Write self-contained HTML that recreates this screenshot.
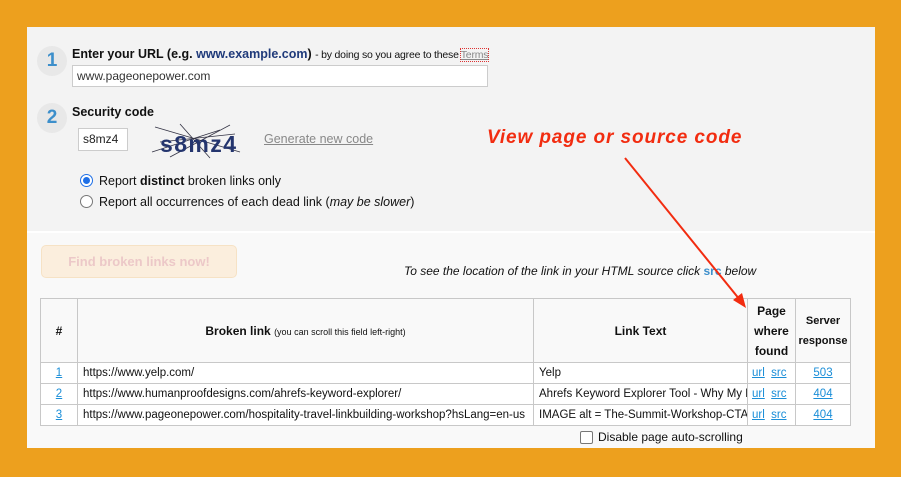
<!DOCTYPE html>
<html><head><style>
body{margin:0;width:901px;height:477px;background:#eda01e;font-family:"Liberation Sans",Arial,sans-serif;position:relative;overflow:hidden}
.panel{position:absolute;left:27px;top:27px;width:848px;height:421px;background:#f9f9f9}
.top{position:absolute;left:0;top:0;width:848px;height:204px;background:#f3f3f3;border-bottom:2px solid #fff}
.a{position:absolute;white-space:nowrap}
.num{position:absolute;width:30px;height:30px;border-radius:50%;background:#e8e8e8;color:#3d8fcb;font-size:19px;font-weight:bold;text-align:center;line-height:30px}
table{position:absolute;left:40px;top:298px;border-collapse:collapse;font-size:11.5px;color:#111;table-layout:fixed;width:811px}
td,th{border:1px solid #c8c8c8;padding:0 5px;white-space:nowrap;overflow:hidden}
th{font-size:12px;background:#f9f9f9}
td{background:#fff;height:20px}
.l{color:#1a8ed8;text-decoration:underline}
.c{text-align:center}
</style></head><body>
<div class="panel"><div class="top"></div></div>
<div class="num" style="left:37px;top:46px">1</div>
<div class="num" style="left:37px;top:103px">2</div>
<div class="a" style="left:72px;top:47px;font-size:12.5px;font-weight:bold;color:#111">Enter your URL (e.g. <span style="color:#1f3a7a">www.example.com</span>) <span style="font-weight:normal;font-size:10.5px;letter-spacing:-0.2px">- by doing so you agree to these<span style="color:#888;text-decoration:underline;outline:1px dotted #d33;margin-left:2px">Terms</span></span></div>
<div class="a" style="left:72px;top:65px;width:410px;height:20px;background:#fff;border:1px solid #ccc;font-size:12px;line-height:20px;padding-left:4px;color:#333">www.pageonepower.com</div>
<div class="a" style="left:72px;top:105px;font-size:12.5px;font-weight:bold;color:#111">Security code</div>
<div class="a" style="left:78px;top:128px;width:44px;height:21px;background:#fff;border:1px solid #ccc;font-size:12px;line-height:21px;padding-left:4px;color:#222">s8mz4</div>
<svg class="a" style="left:150px;top:122px" width="95" height="38"><g stroke="#334" stroke-width="0.8"><line x1="5" y1="5" x2="90" y2="30"/><line x1="20" y1="35" x2="80" y2="3"/><line x1="10" y1="20" x2="85" y2="12"/><line x1="30" y1="2" x2="60" y2="36"/><line x1="2" y1="30" x2="70" y2="8"/></g><text x="10" y="30" font-family="Liberation Sans" font-weight="bold" font-size="23" fill="#24356e" textLength="76">s8mz4</text></svg>
<div class="a" style="left:264px;top:132px;font-size:12.5px;color:#888;text-decoration:underline">Generate new code</div>
<div class="a" style="left:487px;top:127px;font-size:19px;font-weight:bold;font-style:italic;color:#f22c10;letter-spacing:0.9px">View page or source code</div>
<div class="a" style="left:80px;top:174px;width:11px;height:11px;border-radius:50%;border:1px solid #1e6fe6;background:#fff"><div style="margin:2px;width:7px;height:7px;border-radius:50%;background:#1e6fe6"></div></div>
<div class="a" style="left:99px;top:174px;font-size:12.5px;color:#111">Report <b>distinct</b> broken links only</div>
<div class="a" style="left:80px;top:195px;width:11px;height:11px;border-radius:50%;border:1px solid #777;background:#fff"></div>
<div class="a" style="left:99px;top:195px;font-size:12.5px;color:#111">Report all occurrences of each dead link (<i>may be slower</i>)</div>
<div class="a" style="left:41px;top:245px;width:194px;height:31px;background:#fbeedd;border:1px solid #f6e2c5;border-radius:5px;color:#ecc8c8;font-weight:bold;font-size:13px;text-align:center;line-height:31px">Find broken links now!</div>
<div class="a" style="left:404px;top:264px;font-size:12px;font-style:italic;color:#111">To see the location of the link in your HTML source click <b style="color:#3d8fcb;font-style:normal">src</b> below</div>
<table>
<col style="width:37px"><col style="width:456px"><col style="width:214px"><col style="width:48px"><col style="width:55px">
<tr style="height:64px"><th>#</th><th>Broken link <span style="font-weight:normal;font-size:9px">(you can scroll this field left-right)</span></th><th>Link Text</th><th style="line-height:20px;padding:0">Page<br>where<br>found</th><th style="font-size:11px;line-height:20px;padding:0">Server<br>response</th></tr>
<tr><td class="c"><span class="l">1</span></td><td>https://www.yelp.com/</td><td>Yelp</td><td style="padding:0 4px"><span class="l">url</span>&nbsp; <span class="l">src</span></td><td class="c"><span class="l">503</span></td></tr>
<tr><td class="c"><span class="l">2</span></td><td>https://www.humanproofdesigns.com/ahrefs-keyword-explorer/</td><td>Ahrefs Keyword Explorer Tool - Why My M</td><td style="padding:0 4px"><span class="l">url</span>&nbsp; <span class="l">src</span></td><td class="c"><span class="l">404</span></td></tr>
<tr><td class="c"><span class="l">3</span></td><td>https://www.pageonepower.com/hospitality-travel-linkbuilding-workshop?hsLang=en-us</td><td>IMAGE alt = The-Summit-Workshop-CTA</td><td style="padding:0 4px"><span class="l">url</span>&nbsp; <span class="l">src</span></td><td class="c"><span class="l">404</span></td></tr>
</table>
<div class="a" style="left:580px;top:431px;width:11px;height:11px;border:1px solid #777;border-radius:2px;background:#fff"></div>
<div class="a" style="left:598px;top:430px;font-size:12px;color:#111">Disable page auto-scrolling</div>
<svg class="a" style="left:0;top:0" width="901" height="477"><line x1="625" y1="158" x2="740" y2="300" stroke="#f22c10" stroke-width="2"/><polygon points="746,308 733,300 742,293" fill="#f22c10"/></svg>
</body></html>
